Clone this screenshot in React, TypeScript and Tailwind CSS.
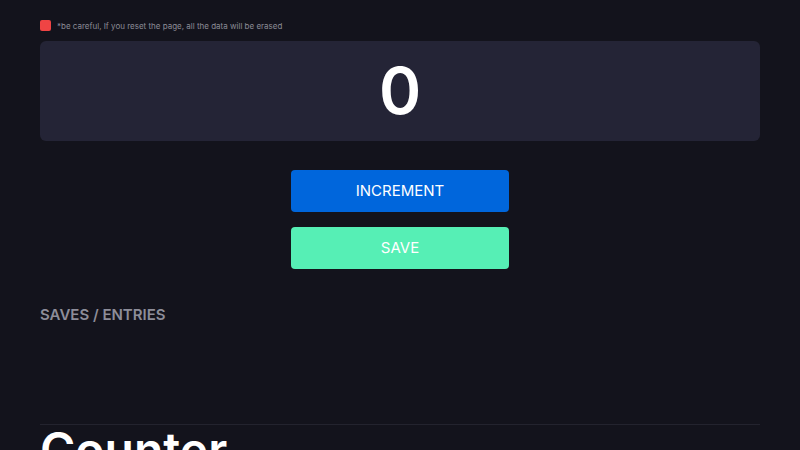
import React, { useState } from 'react';

export default function App() {
  const [count, setCount] = useState(0);

  return (
    <div className="min-h-screen bg-[#13131c] text-white px-10 pt-[20px] font-['Inter',sans-serif] overflow-hidden">
      <div className="flex items-center gap-[6px]">
        <span className="w-[11px] h-[11px] rounded-[2px] bg-[#ef4444]" />
        <p className="text-[8px] leading-none text-[#8b8b96]">*be careful, If you reset the page, all the data will be erased</p>
      </div>

      <div className="mt-[10px] h-[100px] rounded-md bg-[#242436] flex items-center justify-center">
        <span className="text-[64px] font-semibold leading-none">{count}</span>
      </div>

      <div className="mt-[29px] flex flex-col items-center gap-[15px]">
        <button
          onClick={() => setCount(count + 1)}
          className="w-[218px] h-[42px] rounded bg-[#0066dc] text-[15px] text-white"
        >
          INCREMENT
        </button>
        <button className="w-[218px] h-[42px] rounded bg-[#56efb5] text-[15px] text-white">
          SAVE
        </button>
      </div>

      <h3 className="mt-[35px] text-[15px] font-semibold text-[#8d8d99]">SAVES / ENTRIES</h3>

      <div className="mt-[97px] border-t border-[#23232e] pt-[1px]">
        <h1 className="text-[48px] font-semibold leading-none">Counter</h1>
      </div>
    </div>
  );
}
